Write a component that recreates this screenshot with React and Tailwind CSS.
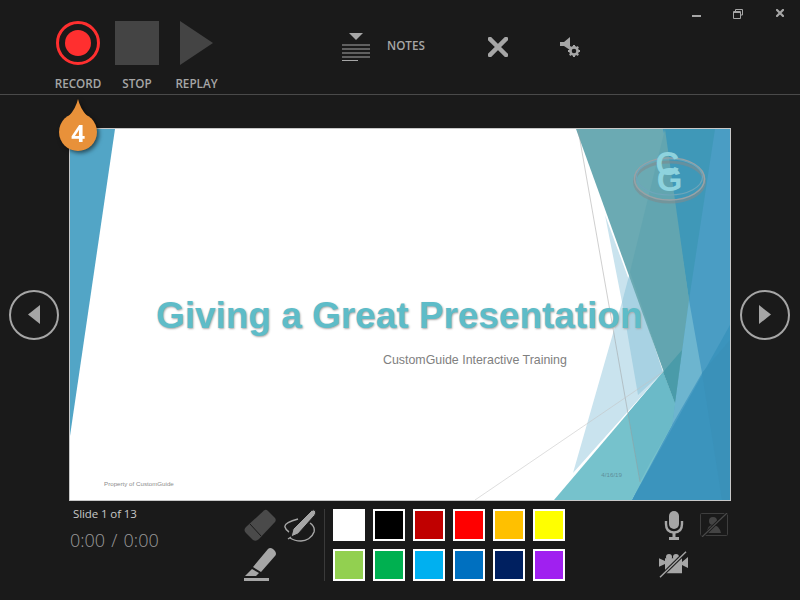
import React from 'react';

const FONT = "font-['Open_Sans',sans-serif]";
const ARIAL = "font-['Liberation_Sans',sans-serif]";

const SWATCHES = [
  '#ffffff', '#000000', '#c00000', '#ff0000', '#ffc000', '#ffff00',
  '#92d050', '#00b050', '#00b0f0', '#0070c0', '#002060', '#a020f0',
];

const GEAR_TEETH = [0, 45, 90, 135, 180, 225, 270, 315];

function TopLabelButton({ width, label, children }) {
  return (
    <div className="flex flex-col items-center" style={{ width }}>
      <div className="h-11 flex items-center justify-center">{children}</div>
      <span className={`mt-[10px] text-[11.7px] leading-4 font-semibold text-[#a6a6a6] whitespace-nowrap ${FONT}`}>
        {label}
      </span>
    </div>
  );
}

function NavArrow({ dir }) {
  return (
    <div className="w-[50px] h-[50px] rounded-full border-[2px] border-[#a6a6a6] flex items-center justify-center">
      <svg width="12" height="19" viewBox="0 0 12 19">
        {dir === 'left' ? <path d="M12 0V19L0 9.5Z" fill="#a6a6a6" /> : <path d="M0 0V19L12 9.5Z" fill="#a6a6a6" />}
      </svg>
    </div>
  );
}

// slide background, viewBox uses page coordinates so shapes are easy to read off the screenshot
function SlideArt() {
  return (
    <svg className="absolute inset-0 w-full h-full" viewBox="70 129 660 371" preserveAspectRatio="none">
      <rect x="70" y="129" width="660" height="371" fill="#ffffff" />
      <path d="M70 129H115L70 436Z" fill="#52a5c6" />

      <path d="M605 215L622 302L573 473L663 372Z" fill="#c9e3ee" />
      <path d="M630 272L663 372L638 395L622 302Z" fill="#a8d2e3" />

      <path d="M663 129H730V500H632L675 403Z" fill="#4a9dc4" />
      <path d="M663 129H715L689 300Z" fill="#3f98b8" />
      <path d="M576 129H663L689 300L675 403Z" fill="#6baab3" />
      <path d="M665 129L689 300L675 403L630 272Z" fill="#62a5b0" />
      <path d="M689 300L702 373L672 425L675 403Z" fill="#6db5cf" />

      <path d="M554 500L663 372L675 403L672 425L632 500Z" fill="#76c2cc" />
      <path d="M628 413L663 372L675 403L672 425L650 463L640 482Z" fill="#6bbac8" />
      <path d="M663 372L682 350L675 403Z" fill="#4a9ba9" />

      <path d="M730 325L632 500H730Z" fill="#3b94bd" />
      <path d="M702 373L722 500H730V340Z" fill="#3a91b9" />

      <path d="M578 129L640 482" stroke="#9a9a9a" strokeOpacity="0.6" strokeWidth="0.8" fill="none" />
      <path d="M475 500L663 372" stroke="#c4c4c4" strokeOpacity="0.7" strokeWidth="0.8" fill="none" />

      {/* logo */}
      <ellipse cx="669.5" cy="182" rx="35" ry="20" fill="none" stroke="#7f8a8e" strokeOpacity="0.6" strokeWidth="3" />
      <ellipse cx="669.5" cy="179" rx="35" ry="21" fill="none" stroke="#98a2a6" strokeWidth="1.6" />
      <ellipse cx="669.5" cy="177" rx="33" ry="18" fill="none" stroke="#6fa6ba" strokeWidth="1.2" />
      <text x="667.5" y="175" textAnchor="middle" fontSize="33" fontWeight="700" fill="#8ed3de" fontFamily="Liberation Sans">C</text>
      <text x="669.5" y="191" textAnchor="middle" fontSize="33" fontWeight="700" fill="#8ed3de" fontFamily="Liberation Sans">G</text>
    </svg>
  );
}

function Slide() {
  return (
    <div className="relative w-[662px] h-[373px] border border-[#c8c8c8] overflow-hidden">
      <SlideArt />
      <div className={`relative h-full flex flex-col ${ARIAL}`}>
        <div className="mt-[165px] ml-[86px] text-[36.95px] leading-[44px] font-bold text-[#5ebcc8] whitespace-nowrap [text-shadow:1px_1px_2px_#aaaaaa]">
          Giving a Great Presentation
        </div>
        <div className="mt-[14px] ml-[313px] text-[12.4px] leading-4 text-[#808080] whitespace-nowrap">
          CustomGuide Interactive Training
        </div>
        <div className="mt-auto mb-[12px] flex justify-between items-end text-[6.2px] leading-2 whitespace-nowrap">
          <span className="ml-[34px] text-[#8c8c8c]">Property of CustomGuide</span>
          <span className="mr-[108px] mb-[9px] text-[#5f8f9a]">4/16/19</span>
        </div>
      </div>
    </div>
  );
}

function Badge() {
  return (
    <div className="absolute left-[59px] top-[99px] w-[38px] h-[52px] drop-shadow-[2px_2px_2px_rgba(0,0,0,0.55)]">
      <svg className="absolute inset-0" width="38" height="52" viewBox="0 0 38 52">
        <path d="M19 0Q21 9 28 17L10 17Q17 9 19 0Z" fill="#e8913a" />
        <circle cx="19" cy="33" r="19" fill="#e8913a" />
      </svg>
      <span className={`absolute inset-x-0 top-[18px] text-center text-[24px] leading-8 font-bold text-white ${FONT}`}>4</span>
    </div>
  );
}

export default function App() {
  return (
    <div className="relative w-[800px] h-[600px] bg-[#1a1a1a] overflow-hidden flex flex-col">
      {/* top toolbar */}
      <div className="h-[95px] border-b border-[#4a4a4a] flex">
        <div className="flex pt-[21px] pl-[48px]">
          <TopLabelButton width={60} label="RECORD">
            <svg width="44" height="44" viewBox="0 0 44 44">
              <circle cx="22" cy="22" r="20.5" fill="none" stroke="#ff2f2f" strokeWidth="3" />
              <circle cx="22" cy="22" r="13" fill="#ff2f2f" />
            </svg>
          </TopLabelButton>
          <TopLabelButton width={58} label="STOP">
            <div className="w-11 h-11 bg-[#444444]" />
          </TopLabelButton>
          <TopLabelButton width={61} label="REPLAY">
            <svg width="33" height="44" viewBox="0 0 33 44">
              <path d="M0 0L33 22L0 44Z" fill="#444444" />
            </svg>
          </TopLabelButton>
        </div>

        <div className="ml-[115px] pt-[33px] flex items-start">
          <svg width="28" height="29" viewBox="0 0 28 29">
            <path d="M7 0H21L14 7Z" fill="#a6a6a6" />
            <path d="M0 12H28M0 16H28M0 20H28M0 24H28M0 27.5H16" stroke="#a6a6a6" strokeWidth="1" />
          </svg>
          <span className={`ml-[17px] mt-[4px] w-[39px] text-[11.7px] leading-4 font-semibold text-[#a6a6a6] ${FONT}`}>NOTES</span>
        </div>

        <div className="ml-[62px] pt-[37px]">
          <svg width="20" height="20" viewBox="0 0 20 20">
            <path d="M2 2L18 18M18 2L2 18" stroke="#a6a6a6" strokeWidth="4.5" strokeLinecap="square" />
          </svg>
        </div>

        <div className="ml-[52px] pt-[37px]">
          <svg width="20" height="20" viewBox="0 0 20 20" fill="#a6a6a6">
            <path d="M0 5H4L10 0V13L4 9H0Z" />
            <circle cx="14" cy="14" r="3.6" fill="none" stroke="#a6a6a6" strokeWidth="2.6" />
            {GEAR_TEETH.map((deg) => (
              <rect key={deg} x="13" y="8" width="2" height="2.4" transform={`rotate(${deg} 14 14)`} />
            ))}
          </svg>
        </div>

        {/* window buttons */}
        <div className="ml-auto pt-[9px] pr-[16px] flex items-start">
          <div className="mt-[6px] w-[9px] h-[2px] bg-[#a6a6a6]" />
          <svg className="ml-[32px]" width="10" height="10" viewBox="0 0 10 10" fill="none" stroke="#a6a6a6">
            <path d="M2.5 2.5V0.5H9.5V6H7.5" />
            <path d="M0.5 2.5H7.5V9.5H0.5Z" />
            <path d="M0.5 3.5H7.5" />
          </svg>
          <svg className="ml-[33px]" width="8" height="8" viewBox="0 0 8 8">
            <path d="M1 1L7 7M7 1L1 7" stroke="#a6a6a6" strokeWidth="2.2" strokeLinecap="square" />
          </svg>
        </div>
      </div>

      {/* slide row */}
      <div className="pt-[33px] flex items-center">
        <div className="w-[69px] pr-px flex justify-center">
          <NavArrow dir="left" />
        </div>
        <Slide />
        <div className="w-[69px] pr-px flex justify-center">
          <NavArrow dir="right" />
        </div>
      </div>

      {/* bottom tools */}
      <div className="flex pt-[8px] flex-1">
        <div className={`w-[244px] pl-[70px] ${FONT}`}>
          <div className="pl-[3px] -mt-px text-[11.5px] leading-[12px] tracking-[-0.1px] text-[#c8c8c8] whitespace-nowrap">Slide 1 of 13</div>
          <div className="mt-[8px] text-[18px] leading-6 font-light text-[#9a9a9a] whitespace-pre [word-spacing:1.5px]">0:00 / 0:00</div>
        </div>

        <div className="w-[72px] flex flex-col">
          <div className="flex justify-between">
            <svg width="32" height="33" viewBox="0 0 32 33">
              <path d="M20 1.5Q22 0 24 2L31 9Q32.5 11 31 13L15 30Q12 33 9 31L2 24Q-1 21 2 18Z" fill="#4a4a4a" />
              <path d="M6 15L17 27" stroke="#1a1a1a" strokeWidth="1" />
            </svg>
            <svg width="32" height="33" viewBox="0 0 32 33" fill="none">
              <path d="M14 10C6 12 0 15 1 18C1.5 20 3 22 5 23M26 14C29 16 31 19 30 23C28 29 22 32 17 32C13 32 9 31 6 29" stroke="#a6a6a6" strokeWidth="1.4" />
              <path d="M27.5 1.5Q30 0 31.5 2Q32.5 4 30.5 6.5L14 25L7 28L9 20Z" fill="#a6a6a6" stroke="#1a1a1a" strokeWidth="1" />
              <path d="M7 28L4 30" stroke="#a6a6a6" strokeWidth="1.4" />
            </svg>
          </div>
          <div className="mt-[6px]">
            <svg width="32" height="33" viewBox="0 0 32 33">
              <path d="M24 1Q26 -1 29 1L31 3Q33 6 31 8L17 24L9 19Z" fill="#a6a6a6" />
              <path d="M8 21L15 25L12 28H1Z" fill="#a6a6a6" />
              <rect x="0" y="30" width="25" height="3" fill="#a6a6a6" />
            </svg>
          </div>
        </div>

        <div className="ml-[8px] w-px h-[72px] bg-[#3a3a3a]" />

        <div className="ml-[8px] grid grid-cols-[repeat(6,32px)] gap-x-2 gap-y-2 content-start">
          {SWATCHES.map((color) => (
            <div key={color} className="w-8 h-8 border-2 border-white" style={{ backgroundColor: color }} />
          ))}
        </div>

        <div className="ml-[93px] w-[70px] flex flex-col items-start">
          <div className="flex items-start mt-px">
            <svg className="ml-[6px]" width="20" height="30" viewBox="0 0 20 30" fill="none">
              <rect x="5" y="1" width="10" height="18" rx="5" fill="#a6a6a6" />
              <path d="M2 11V14Q2 22.5 10 22.5Q18 22.5 18 14V11" stroke="#a6a6a6" strokeWidth="2.4" />
              <path d="M10 22V27" stroke="#a6a6a6" strokeWidth="3" />
              <rect x="5" y="27" width="10" height="3" fill="#a6a6a6" />
            </svg>
            <svg className="ml-[16px] mt-[3px]" width="28" height="24" viewBox="0 0 28 24" fill="none">
              <rect x="0.5" y="0.5" width="27" height="22" rx="1" stroke="#3e3e3e" />
              <circle cx="13" cy="8" r="4" fill="#444444" />
              <path d="M7 20Q7 12 13 12Q19 12 21 20Z" fill="#444444" />
              <path d="M2 24L27 0" stroke="#1a1a1a" strokeWidth="3" />
              <path d="M2 24L27 0" stroke="#4a4a4a" strokeWidth="1.2" />
            </svg>
          </div>
          <svg className="mt-[11px]" width="30" height="27" viewBox="0 0 30 27" fill="none">
            <path d="M1 7.3L7 10V7.3H24V11L30 6V17L24 14V22.3H7V13L1 15.7Z" fill="#a6a6a6" />
            <circle cx="11" cy="6" r="3" fill="#a6a6a6" />
            <circle cx="18" cy="6" r="3" fill="#a6a6a6" />
            <path d="M2 26.3L28 0.7" stroke="#1a1a1a" strokeWidth="3.5" />
            <path d="M2 26.3L28 0.7" stroke="#a6a6a6" strokeWidth="1.4" />
          </svg>
        </div>
      </div>

      <Badge />
    </div>
  );
}
